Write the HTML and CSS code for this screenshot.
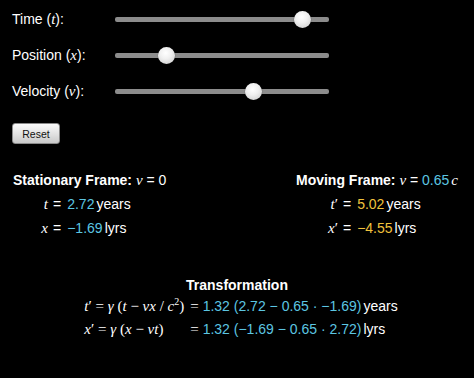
FILE: index.html
```html
<!DOCTYPE html>
<html>
<head>
<meta charset="utf-8">
<link rel="stylesheet" href="styles.css">
</head>
<body>
<div class="controls">
  <div class="slider-row">
    <span class="label">Time (<i class="m">t</i>):</span>
    <div class="track"><div class="thumb" style="left:187px"></div></div>
  </div>
  <div class="slider-row">
    <span class="label">Position (<i class="m">x</i>):</span>
    <div class="track"><div class="thumb" style="left:51px"></div></div>
  </div>
  <div class="slider-row">
    <span class="label">Velocity (<i class="m">v</i>):</span>
    <div class="track"><div class="thumb" style="left:138px"></div></div>
  </div>
</div>
<button class="reset">Reset</button>
<div class="frames">
  <div class="frame frame-left">
    <div class="heading">Stationary Frame: <span class="eq"><i class="m">v</i> = 0</span></div>
    <div class="row"><span class="sym"><i class="m">t</i></span><span class="equals">=</span><span class="val cyan">2.72</span><span class="unit">years</span></div>
    <div class="row"><span class="sym"><i class="m">x</i></span><span class="equals">=</span><span class="val cyan">−1.69</span><span class="unit">lyrs</span></div>
  </div>
  <div class="frame frame-right">
    <div class="heading">Moving Frame: <span class="eq"><i class="m">v</i> = <span class="cyan">0.65</span><i class="m c">c</i></span></div>
    <div class="row"><span class="sym"><i class="m">t</i>′</span><span class="equals">=</span><span class="val gold">5.02</span><span class="unit">years</span></div>
    <div class="row"><span class="sym"><i class="m">x</i>′</span><span class="equals">=</span><span class="val gold">−4.55</span><span class="unit">lyrs</span></div>
  </div>
</div>
<div class="transform">
  <div class="heading">Transformation</div>
  <div class="tgrid">
    <span class="lhs"><i class="m">t</i>′ = <i class="m">γ</i> (<i class="m">t</i> − <i class="m">vx</i> / <i class="m">c</i><sup>2</sup>)</span>
    <span class="rhs"><span class="eqs">=</span> <span class="cyan">1.32 (2.72 − 0.65 · −1.69)</span><span class="unit">years</span></span>
    <span class="lhs"><i class="m">x</i>′ = <i class="m">γ</i> (<i class="m">x</i> − <i class="m">vt</i>)</span>
    <span class="rhs"><span class="eqs">=</span> <span class="cyan">1.32 (−1.69 − 0.65 · 2.72)</span><span class="unit">lyrs</span></span>
  </div>
</div>
</body>
</html>
```
FILE: styles.css
```css
html, body {
  margin: 0;
  padding: 0;
  background: #000;
  color: #fff;
  font-family: "Liberation Sans", Arial, sans-serif;
  font-size: 14px;
}
body {
  width: 474px;
  height: 378px;
  overflow: hidden;
}
.m {
  font-family: "Liberation Serif", "Times New Roman", serif;
  font-style: italic;
  font-size: 15px;
}
.controls {
  padding-top: 1px;
}
.slider-row {
  display: flex;
  align-items: center;
  height: 36px;
}
.label {
  width: 103px;
  padding-left: 12px;
}
.track {
  position: relative;
  width: 214px;
  height: 5px;
  border-radius: 2px;
  background: #8c8c8c;
}
.thumb {
  position: absolute;
  top: 50%;
  width: 17px;
  height: 17px;
  margin: -8.5px 0 0 -8.5px;
  border-radius: 50%;
  background: radial-gradient(circle at 45% 35%, #ffffff 0%, #f0f0f0 40%, #c8c8c8 100%);
  box-shadow: 0 0 1px rgba(0,0,0,0.6);
}
.reset {
  display: block;
  margin: 14px 0 0 12px;
  width: 48px;
  height: 21px;
  padding: 0;
  border: 1px solid #8a8a8a;
  border-radius: 3px;
  background: linear-gradient(#fbfbfb, #dedede 60%, #c9c9c9);
  color: #111;
  font-family: "Liberation Sans", Arial, sans-serif;
  font-size: 10.5px;
}
.frames {
  display: flex;
  justify-content: space-between;
  margin-top: 24px;
  padding: 0 16px 0 13px;
}
.heading {
  font-weight: bold;
  line-height: 24px;
  height: 24px;
}
.heading .eq {
  font-weight: normal;
}
.heading .c {
  margin-left: 2px;
}
.row {
  display: flex;
  align-items: center;
  height: 24px;
}
.frame-left .row {
  padding-left: 19px;
}
.frame-right .row {
  padding-left: 26px;
}
.sym {
  width: 16px;
  text-align: right;
  font-family: "Liberation Serif", "Times New Roman", serif;
  font-size: 15px;
}
.equals {
  padding: 0 6px 0 5px;
}
.unit {
  margin-left: 2px;
}
.cyan {
  color: #5cc6e2;
}
.gold {
  color: #f0c23c;
}
.transform {
  margin-top: 36px;
  display: flex;
  flex-direction: column;
  align-items: center;
}
.transform .heading {
  line-height: 18px;
  height: 18px;
}
.tgrid {
  display: grid;
  grid-template-columns: auto auto;
  grid-auto-rows: 23px;
  align-items: center;
  column-gap: 6px;
  padding-left: 8px;
  margin-top: 1px;
}
.lhs {
  font-family: "Liberation Serif", "Times New Roman", serif;
  font-size: 15px;
}
.lhs sup {
  font-size: 10px;
  line-height: 0;
}
.rhs .eqs {
  font-family: "Liberation Serif", "Times New Roman", serif;
  font-size: 15px;
}
```
